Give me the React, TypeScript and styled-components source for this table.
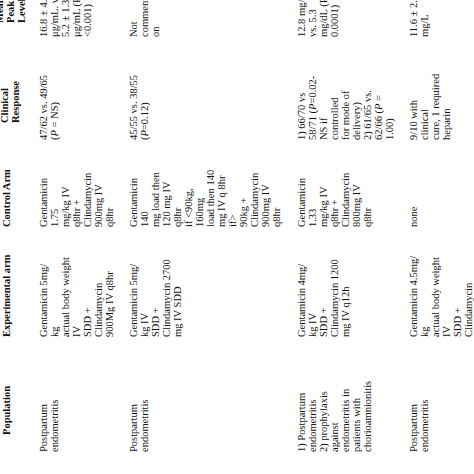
import React from 'react';
import styled, { createGlobalStyle } from 'styled-components';

const GlobalStyle = createGlobalStyle`
  html, body {
    margin: 0;
    padding: 0;
    background: #fff;
  }
`;

const Page = styled.div`
  width: 474px;
  height: 474px;
  overflow: hidden;
  background: #fff;
`;

// the scanned table lies on its side, so the whole sheet is turned a quarter
const Sheet = styled.div`
  width: 474px;
  height: 474px;
  padding-left: 22px;
  box-sizing: border-box;
  transform: rotate(-90deg);
  transform-origin: 50% 50%;
  font-family: 'Liberation Serif', 'Times New Roman', serif;
  font-size: 10.5px;
  line-height: 11px;
  color: #111;
`;

const Row = styled.div<{ $head?: boolean; $space?: number }>`
  display: grid;
  grid-template-columns: 115px 110px 87px 103px 90px;
  align-items: start;
  height: ${({ $head }) => ($head ? '38px' : 'auto')};
  padding-bottom: ${({ $space }) => ($space ?? 0)}px;
`;

const HeadCell = styled.div<{ $indent?: number; $lift?: number }>`
  font-weight: 700;
  white-space: nowrap;
  padding-left: ${({ $indent }) => $indent ?? 0}px;
  margin-top: ${({ $lift }) => $lift ?? 1}px;
`;

const Cell = styled.div`
  white-space: nowrap;
`;

const Line = styled.div`
  height: 11px;
`;

const P = styled.i`
  font-style: italic;
`;

type Lines = React.ReactNode[];

interface RowData {
  population: Lines;
  experimental: Lines;
  control: Lines;
  response: Lines;
  peak: Lines;
  space: number;
}

const rows: RowData[] = [
  {
    population: ['Postpartum', 'endometritis'],
    experimental: ['Gentamicin 5mg/', 'kg', 'actual body weight', 'IV', 'SDD +', 'Clindamycin', '900Mg IV q8hr'],
    control: ['Gentamicin', '1.75', 'mg/kg IV', 'q8hr +', 'Clindamycin', '900mg IV', 'q8hr'],
    response: ['47/62 vs. 49/65', <>(<P>P</P> = NS)</>],
    peak: ['16.8 ± 4.1', 'μg/mL. vs.', '5.2 ± 1.3', 'μg/mL (P', '<0.001)'],
    space: 13,
  },
  {
    population: ['Postpartum', 'endometritis'],
    experimental: ['Gentamicin 5mg/', 'kg IV', 'SDD +', 'Clindamycin 2700', 'mg IV SDD'],
    control: [
      'Gentamicin',
      '140',
      'mg load then',
      '120 mg IV',
      'q8hr',
      'if <90kg,',
      '160mg',
      'load then 140',
      'mg IV q 8hr',
      'if>',
      '90kg +',
      'Clindamycin',
      '900mg IV',
      'q8hr',
    ],
    response: ['45/55 vs. 38/55', <>(<P>P</P>=0.12)</>],
    peak: ['Not', 'commented', 'on'],
    space: 14,
  },
  {
    population: [
      '1) Postpartum',
      'endometritis',
      '2) prophylaxis',
      'against',
      'endometritis in',
      'patients with',
      'chorioamnionitis',
    ],
    experimental: ['Gentamicin 4mg/', 'kg IV', 'SDD +', 'Clindamycin 1200', 'mg IV q12h'],
    control: ['Gentamicin', '1.33', 'mg/kg IV', 'q8hr +', 'Clindamycin', '800mg IV', 'q8hr'],
    response: [
      '1) 66/70 vs',
      <>58/71 (<P>P</P>=0.02-</>,
      'NS if',
      'controlled',
      'for mode of',
      'delivery)',
      '2) 61/65 vs.',
      <>62/66 (<P>P</P> =</>,
      '1.00)',
    ],
    peak: ['12.8 mg/dL', 'vs. 5.3', 'mg/dL (P <', '0.0001)'],
    space: 13,
  },
  {
    population: ['Postpartum', 'endometritis'],
    experimental: ['Gentamicin 4.5mg/', 'kg', 'actual body weight', 'IV', 'SDD +', 'Clindamycin', '900Mg IV q8hr'],
    control: ['none'],
    response: ['9/10 with', 'clinical', 'cure, 1 required', 'heparin'],
    peak: ['11.6 ± 2.1', 'mg/L'],
    space: 0,
  },
];

const Stack: React.FC<{ lines: Lines }> = ({ lines }) => (
  <Cell>
    {lines.map((l, i) => (
      <Line key={i}>{l}</Line>
    ))}
  </Cell>
);

const App: React.FC = () => (
  <Page>
    <GlobalStyle />
    <Sheet>
      <Row $head>
        <HeadCell $indent={17}>Population</HeadCell>
        <HeadCell>Experimental arm</HeadCell>
        <HeadCell>Control Arm</HeadCell>
        <HeadCell $indent={17} $lift={-1}>
          <Line>Clinical</Line>
          <Line>Response</Line>
        </HeadCell>
        <HeadCell $indent={14} $lift={-6}>
          <Line>Mean</Line>
          <Line>Peak</Line>
          <Line>Level</Line>
        </HeadCell>
      </Row>
      {rows.map((r, i) => (
        <Row key={i} $space={r.space}>
          <Stack lines={r.population} />
          <Stack lines={r.experimental} />
          <Stack lines={r.control} />
          <Stack lines={r.response} />
          <Stack lines={r.peak} />
        </Row>
      ))}
    </Sheet>
  </Page>
);

export default App;
